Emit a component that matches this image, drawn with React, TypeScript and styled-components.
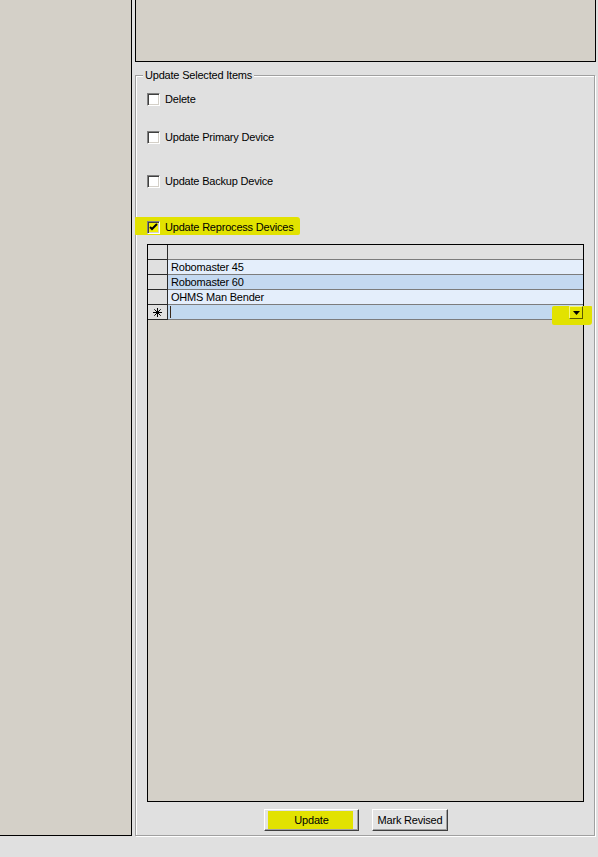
import React from 'react'
import styled, { createGlobalStyle } from 'styled-components'

const GlobalStyle = createGlobalStyle`
  *, *::before, *::after { box-sizing: border-box; }
  body {
    margin: 0;
    background: #e0e0e0;
    font-family: 'Liberation Sans', Arial, sans-serif;
    font-size: 11px;
    letter-spacing: -0.2px;
    color: #000;
  }
`

const HIGHLIGHT = '#e2e200'

const Page = styled.div`
  display: flex;
  align-items: flex-start;
  width: 598px;
  height: 857px;
  background: #e0e0e0;
  overflow: hidden;
`

const LeftPanel = styled.div`
  flex-shrink: 0;
  width: 132px;
  height: 836px;
  background: #d4d0c8;
  border-right: 1px solid #000;
  border-bottom: 1px solid #000;
`

const Main = styled.div`
  display: flex;
  flex-direction: column;
  margin-left: 3px;
  width: 461px;
`

const TopBox = styled.div`
  height: 62px;
  background: #d4d0c8;
  border: 1px solid #000;
  border-top: none;
`

const GroupBox = styled.div`
  position: relative;
  display: flex;
  flex-direction: column;
  margin-top: 13px;
  width: 460px;
  height: 761px;
  padding: 17px 0 0 11px;
  border: 1px solid #a0a0a0;
  box-shadow: inset 1px 1px 0 #fff, 1px 1px 0 #fff;
`

const Legend = styled.span`
  position: absolute;
  top: -7px;
  left: 7px;
  padding: 0 2px;
  background: #e0e0e0;
  line-height: 13px;
`

const CheckRow = styled.label<{ $top: number; $marked?: boolean }>`
  display: flex;
  align-items: center;
  align-self: flex-start;
  gap: 5px;
  height: ${({ $marked }) => ($marked ? 18 : 13)}px;
  margin-top: ${({ $top, $marked }) => $top - ($marked ? 4 : 0)}px;
  margin-bottom: ${({ $marked }) => ($marked ? -1 : 0)}px;
  margin-left: ${({ $marked }) => ($marked ? -12 : 0)}px;
  padding: ${({ $marked }) => ($marked ? '3px 7px 0 12px' : '0')};
  background: ${({ $marked }) => ($marked ? HIGHLIGHT : 'transparent')};
  border-radius: 1px 3px 2px 1px;
  line-height: 13px;
`

const Box = styled.span<{ $marked?: boolean }>`
  display: inline-flex;
  align-items: center;
  justify-content: center;
  width: 13px;
  height: 13px;
  border: 1px solid;
  border-color: #808080 #fff #fff #808080;
  box-shadow: inset 1px 1px 0 #404040, inset -1px -1px 0 #d4d0c8;
  background: ${({ $marked }) => ($marked ? '#f0f000' : '#fff')};
`

const Grid = styled.div`
  display: flex;
  flex-direction: column;
  margin-top: 10px;
  width: 437px;
  height: 558px;
  background: #d4d0c8;
  border: 1px solid #000;
`

const GridRow = styled.div`
  display: grid;
  grid-template-columns: 20px 1fr;
  height: 15px;
`

const RowHeader = styled.div`
  display: flex;
  align-items: center;
  justify-content: center;
  background: #e0e0e0;
  border-right: 1px solid #2a2a2a;
  border-bottom: 1px solid #2a2a2a;
`

const Cell = styled.div<{ $bg: string }>`
  position: relative;
  display: flex;
  align-items: center;
  justify-content: space-between;
  padding-left: 3px;
  background: ${({ $bg }) => $bg};
  border-bottom: 1px solid #7c7c7c;
  line-height: 14px;
  white-space: nowrap;
`

const Caret = styled.span`
  width: 1px;
  height: 12px;
  margin-left: -1px;
  background: #3a2a1a;
`

const Mark = styled.span`
  position: absolute;
  right: -9px;
  top: 1px;
  width: 40px;
  height: 19px;
  background: ${HIGHLIGHT};
  border-radius: 2px 1px 3px 2px;
`

const DropButton = styled.span`
  position: relative;
  display: flex;
  align-items: center;
  justify-content: center;
  width: 14px;
  height: 13px;
  margin-top: 1px;
  background: #e4e400;
  border: 1px solid;
  border-color: #f6f680 #5a5a00 #5a5a00 #f6f680;
`

const ButtonBar = styled.div`
  display: flex;
  gap: 13px;
  margin-top: 7px;
  padding-left: 117px;
`

const Button = styled.button<{ $w: number; $marked?: boolean }>`
  width: ${({ $w }) => $w}px;
  height: 22px;
  padding: 0;
  font-family: 'Liberation Sans', Arial, sans-serif;
  font-size: 11px;
  letter-spacing: -0.2px;
  color: #000;
  background: ${({ $marked }) =>
    $marked
      ? `linear-gradient(${HIGHLIGHT}, ${HIGHLIGHT}) 3px 1px / 85px 19px no-repeat, #e3e3e3`
      : '#e3e3e3'};
  border: 1px solid;
  border-color: #fff #404040 #404040 #fff;
  box-shadow: inset -1px -1px 0 #a0a0a0;
`

const Check = () => (
  <svg width='9' height='9' viewBox='0 0 9 9'>
    <polyline points='1,4 3,6 8,1' fill='none' stroke='#000' strokeWidth='2' />
  </svg>
)

const Star = () => (
  <svg width='9' height='9' viewBox='0 0 9 9'>
    <g stroke='#000' strokeWidth='1'>
      <line x1='4.5' y1='0' x2='4.5' y2='9' />
      <line x1='0' y1='4.5' x2='9' y2='4.5' />
      <line x1='1.3' y1='1.3' x2='7.7' y2='7.7' />
      <line x1='7.7' y1='1.3' x2='1.3' y2='7.7' />
    </g>
  </svg>
)

const options = [
  { label: 'Delete', top: 0 },
  { label: 'Update Primary Device', top: 25 },
  { label: 'Update Backup Device', top: 31 },
  { label: 'Update Reprocess Devices', top: 33, checked: true }
]

const devices = [
  { name: 'Robomaster 45', bg: '#e4eefb' },
  { name: 'Robomaster 60', bg: '#c4d9f1' },
  { name: 'OHMS Man Bender', bg: '#e4eefb' }
]

export default function App() {
  return (
    <>
      <GlobalStyle />
      <Page>
        <LeftPanel />
        <Main>
          <TopBox />
          <GroupBox>
            <Legend>Update Selected Items</Legend>
            {options.map(opt => (
              <CheckRow key={opt.label} $top={opt.top} $marked={opt.checked}>
                <Box $marked={opt.checked}>{opt.checked && <Check />}</Box>
                {opt.label}
              </CheckRow>
            ))}
            <Grid>
              <GridRow>
                <RowHeader />
                <Cell $bg='#e0e0e0' />
              </GridRow>
              {devices.map(d => (
                <GridRow key={d.name}>
                  <RowHeader />
                  <Cell $bg={d.bg}>{d.name}</Cell>
                </GridRow>
              ))}
              <GridRow>
                <RowHeader>
                  <Star />
                </RowHeader>
                <Cell $bg='#c2d9ef'>
                  <Caret />
                  <Mark />
                  <DropButton>
                    <svg width='7' height='4' viewBox='0 0 7 4'>
                      <polygon points='0,0 7,0 3.5,4' fill='#000' />
                    </svg>
                  </DropButton>
                </Cell>
              </GridRow>
            </Grid>
            <ButtonBar>
              <Button $w={95} $marked>
                Update
              </Button>
              <Button $w={76}>Mark Revised</Button>
            </ButtonBar>
          </GroupBox>
        </Main>
      </Page>
    </>
  )
}
